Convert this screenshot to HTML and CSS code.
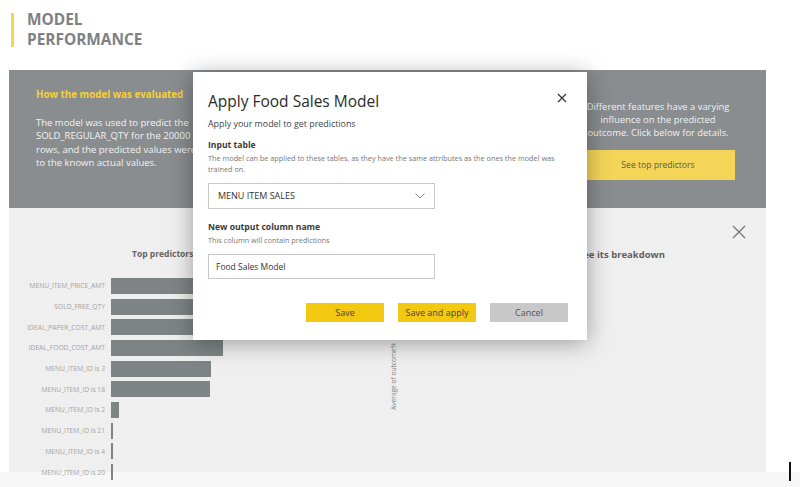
FILE: index.html
```html
<!DOCTYPE html>
<html lang="en">
<head>
  <meta charset="UTF-8">
  <meta name="viewport" content="width=device-width, initial-scale=1.0">
  <title>Model Performance</title>
  <link rel="stylesheet" href="styles.css">
</head>
<body>
  <header class="page-header">
    <div class="accent"></div>
    <h1 class="page-title">MODEL<br>PERFORMANCE</h1>
  </header>

  <main class="canvas">
    <section class="summary">
      <div class="eval">
        <h3 class="eval-title">How the model was evaluated</h3>
        <p class="eval-text">
          The model was used to predict the<br>
          SOLD_REGULAR_QTY for the 20000 validation<br>
          rows, and the predicted values were compared<br>
          to the known actual values.
        </p>
      </div>
      <div class="insight">
        <p class="insight-text">Different features have a varying<br>influence on the predicted<br>outcome. Click below for details.</p>
        <button class="btn-yellow">See top predictors</button>
      </div>
    </section>

    <section class="details">
      <div class="predictors">
        <h4 class="predictors-title">Top predictors</h4>
        <div class="bars">
          <span class="bar-label">MENU_ITEM_PRICE_AMT</span><div class="bar" style="width: 260px"></div>
          <span class="bar-label">SOLD_FREE_QTY</span><div class="bar" style="width: 210px"></div>
          <span class="bar-label">IDEAL_PAPER_COST_AMT</span><div class="bar" style="width: 160px"></div>
          <span class="bar-label">IDEAL_FOOD_COST_AMT</span><div class="bar" style="width: 112px"></div>
          <span class="bar-label">MENU_ITEM_ID is 3</span><div class="bar" style="width: 100px"></div>
          <span class="bar-label">MENU_ITEM_ID is 18</span><div class="bar" style="width: 99px"></div>
          <span class="bar-label">MENU_ITEM_ID is 2</span><div class="bar" style="width: 8px"></div>
          <span class="bar-label">MENU_ITEM_ID is 21</span><div class="bar" style="width: 2px"></div>
          <span class="bar-label">MENU_ITEM_ID is 4</span><div class="bar" style="width: 2px"></div>
          <span class="bar-label">MENU_ITEM_ID is 20</span><div class="bar" style="width: 2px"></div>
        </div>
      </div>

      <div class="breakdown">
        <span class="axis-label">Average of outcome%</span>
        <div class="breakdown-main">
          <button class="close-big" aria-label="Close">
            <svg width="14" height="14" viewBox="0 0 14 14"><path d="M1 1L13 13M13 1L1 13" stroke="#777" stroke-width="1.3" fill="none"/></svg>
          </button>
          <h4 class="breakdown-title">Select a predictor to see its breakdown</h4>
        </div>
      </div>
    </section>
  </main>

  <div class="footer-strip"></div>
  <div class="cursor"></div>

  <div class="modal">
    <div class="modal-head">
      <h2 class="modal-title">Apply Food Sales Model</h2>
      <button class="close-small" aria-label="Close">
        <svg width="10" height="10" viewBox="0 0 10 10"><path d="M1 1L9 9M9 1L1 9" stroke="#333" stroke-width="1.2" fill="none"/></svg>
      </button>
    </div>
    <p class="modal-sub">Apply your model to get predictions</p>

    <label class="field-label">Input table</label>
    <p class="field-help">The model can be applied to these tables, as they have the same attributes as the ones the model was trained on.</p>
    <div class="select">
      <span>MENU ITEM SALES</span>
      <svg width="10" height="6" viewBox="0 0 10 6"><path d="M0.5 0.5L5 5L9.5 0.5" stroke="#888" stroke-width="1" fill="none"/></svg>
    </div>

    <label class="field-label label-gap">New output column name</label>
    <p class="field-help">This column will contain predictions</p>
    <input class="text-input" type="text" value="Food Sales Model">

    <div class="actions">
      <button class="btn btn-primary">Save</button>
      <button class="btn btn-primary">Save and apply</button>
      <button class="btn btn-cancel">Cancel</button>
    </div>
  </div>
</body>
</html>
```

FILE: styles.css
```css
* {
  margin: 0;
  padding: 0;
  box-sizing: border-box;
}

body, html {
  height: 100%;
  width: 100%;
  font-family: "Open Sans", "Noto Sans", Arial, sans-serif;
  background: #fff;
  overflow: hidden;
}

button {
  font-family: inherit;
  border: none;
  background: none;
  cursor: pointer;
}

.page-header {
  display: flex;
  align-items: center;
  height: 70px;
  padding: 0 0 10px 11px;
}

.accent {
  width: 3px;
  height: 34px;
  background: #f5d451;
}

.page-title {
  margin-left: 13px;
  font-size: 15.4px;
  line-height: 20px;
  font-weight: 700;
  color: #7c8184;
}

.canvas {
  margin-left: 9px;
  width: 757px;
}

.summary {
  display: flex;
  height: 138px;
  background: #898d8f;
}

.eval {
  padding: 18px 0 0 27px;
  color: #f3f3f3;
}

.eval-title {
  font-size: 9.8px;
  line-height: 14px;
  font-weight: 700;
  color: #f5d235;
  white-space: nowrap;
}

.eval-text {
  margin-top: 14px;
  font-size: 9.5px;
  line-height: 13.3px;
  white-space: nowrap;
}

.insight {
  width: 176px;
  margin-left: auto;
  margin-right: 20px;
  padding-top: 30px;
  display: flex;
  flex-direction: column;
  align-items: center;
}

.insight-text {
  font-size: 9.4px;
  line-height: 13px;
  color: #f1f1f1;
  text-align: center;
  white-space: nowrap;
}

.btn-yellow {
  margin-top: 11px;
  width: 153px;
  height: 30px;
  background: #f4d558;
  color: #5c5a4c;
  font-size: 8.6px;
}

.details {
  display: flex;
  height: 264px;
  background: #efefef;
}

.predictors {
  width: 375px;
  padding-top: 39px;
}

.predictors-title {
  padding-left: 123px;
  font-size: 8.5px;
  line-height: 14px;
  font-weight: 700;
  color: #666;
}

.bars {
  margin-top: 14.5px;
  display: grid;
  grid-template-columns: 102px 1fr;
  grid-auto-rows: 20.7px;
  align-items: center;
}

.bar-label {
  padding-right: 6px;
  text-align: right;
  font-size: 6.7px;
  color: #a3a3a3;
  white-space: nowrap;
}

.bar {
  height: 16px;
  background: #7e8485;
}

.breakdown {
  flex: 1;
  display: flex;
}

.axis-label {
  writing-mode: vertical-rl;
  transform: rotate(180deg);
  margin: 130px 0 0 5px;
  height: 72px;
  font-size: 6.6px;
  color: #888;
  white-space: nowrap;
}

.breakdown-main {
  flex: 1;
  display: flex;
  flex-direction: column;
  align-items: flex-end;
}

.close-big {
  width: 14px;
  height: 14px;
  margin: 17px 20px 0 0;
}

.breakdown-title {
  margin: 9px 101px 0 0;
  font-size: 9.5px;
  line-height: 14px;
  font-weight: 700;
  color: #5f5f5f;
}

.footer-strip {
  height: 15px;
  background: #f7f7f7;
}

.cursor {
  position: absolute;
  left: 789px;
  top: 462px;
  width: 2px;
  height: 19px;
  background: #111;
}

/* dialog */
.modal {
  position: absolute;
  left: 193px;
  top: 72px;
  width: 394px;
  height: 268px;
  padding: 17px 19px 0 15px;
  background: #fff;
  box-shadow: 0 3px 22px rgba(0, 0, 0, 0.35);
}

.modal-head {
  display: flex;
  justify-content: space-between;
  align-items: flex-start;
}

.modal-title {
  font-size: 15.5px;
  line-height: 24px;
  font-weight: 400;
  color: #2b2b2b;
}

.close-small {
  width: 10px;
  height: 10px;
  margin: 0 1px 0 0;
}

.modal-sub {
  margin-top: 4px;
  font-size: 8.9px;
  line-height: 14px;
  color: #444;
}

.field-label {
  display: block;
  margin-top: 8px;
  font-size: 8.6px;
  line-height: 12px;
  font-weight: 700;
  color: #3a3a3a;
}

.label-gap {
  margin-top: 12px;
}

.field-help {
  margin-top: 2px;
  font-size: 7.3px;
  line-height: 11px;
  color: #777;
}

.select {
  display: flex;
  align-items: center;
  justify-content: space-between;
  margin-top: 7.5px;
  width: 227px;
  height: 26px;
  padding: 0 9px;
  border: 1px solid #c8c8c8;
  font-size: 9px;
  color: #333;
}

.text-input {
  display: block;
  margin-top: 8px;
  width: 227px;
  height: 25px;
  padding: 0 7px;
  border: 1px solid #c8c8c8;
  outline: none;
  font-family: inherit;
  font-size: 8.5px;
  color: #333;
}

.actions {
  display: flex;
  justify-content: flex-end;
  gap: 14px;
  margin-top: 24px;
}

.btn {
  width: 78px;
  height: 19px;
  font-size: 9px;
  color: #444;
}

.btn-primary {
  background: #f2c811;
}

.btn-cancel {
  background: #c8c8c8;
  color: #555;
}
```
